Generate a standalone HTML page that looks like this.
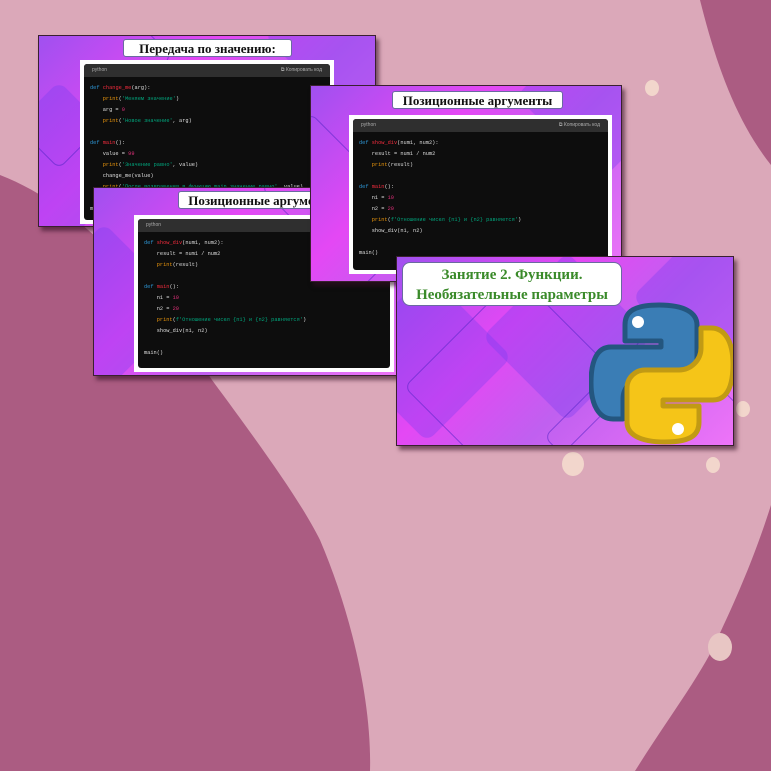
<!DOCTYPE html>
<html><head><meta charset="utf-8"><style>
*{margin:0;padding:0;box-sizing:border-box}
body{width:771px;height:771px;overflow:hidden;background:#dba8b9;position:relative;font-family:"Liberation Sans",sans-serif}
.slide{position:absolute;z-index:1;border:1px solid #3a2030;box-shadow:3px 4px 4px rgba(50,15,35,.6);overflow:hidden;
background:linear-gradient(135deg,#a050f0 0%,#e448f4 35%,#c060f0 60%,#ee74f8 100%)}
.slide .dec{position:absolute;width:120px;height:120px;transform:rotate(45deg);border-radius:10px;background:rgba(120,60,240,.35)}
.slide .ln{position:absolute;width:160px;height:160px;transform:rotate(45deg);border:1px solid rgba(90,40,200,.6);border-radius:8px}
.title{position:absolute;background:#fff;border:1px solid #6a6aa0;border-radius:3px;font-family:"Liberation Serif","DejaVu Serif",serif;font-weight:bold;font-size:13px;color:#111;text-align:center;z-index:2;white-space:nowrap;overflow:hidden}
.code{position:absolute;background:#fff;padding:4px;z-index:2}
.code .in{background:#0d0d0d;width:100%;height:100%;border-radius:3px;position:relative;overflow:hidden}
.code .hd{height:13px;background:#2f2f2f;color:#aaa;font-size:5px;line-height:13px;padding:0 8px;display:flex;justify-content:space-between}
.code pre{font-family:"Liberation Mono",monospace;font-size:5.3px;line-height:11px;color:#ddd;padding:6px 6px}
.k{color:#2e95d3}.f{color:#f22c3d}.p{color:#e9950c}.s{color:#00a67d}.n{color:#df3079}
</style></head><body>
<svg width="771" height="771" style="position:absolute;left:0;top:0">
<path d="M0 175 C90 210 160 300 212 380 C260 445 300 500 320 540 C350 610 372 700 370 771 L0 771Z" fill="#ab5c82"/>
<path d="M700 0 C715 60 735 120 771 165 L771 0Z" fill="#ab5c82"/>
<path d="M635 771 C670 715 705 670 720 633 C745 580 760 540 771 505 L771 771Z" fill="#ab5c82"/>
<ellipse cx="573" cy="464" rx="11" ry="12" fill="#f2d6cc"/><ellipse cx="713" cy="465" rx="7" ry="8" fill="#f2d6cc"/>
<ellipse cx="743" cy="409" rx="7" ry="8" fill="#f2d6cc"/><ellipse cx="652" cy="88" rx="7" ry="8" fill="#f2d6cc"/>
<ellipse cx="720" cy="647" rx="12" ry="14" fill="#e8c6c4"/>
</svg>

<div class="slide" style="left:38px;top:35px;width:338px;height:192px">
<div class="dec" style="left:-40px;top:70px"></div><div class="dec" style="left:250px;top:-60px"></div><div class="ln" style="left:-60px;top:-60px"></div>
<div class="title" style="left:84px;top:3px;width:169px;height:18px;line-height:17px">Передача по значению:</div>
<div class="code" style="left:41px;top:24px;width:254px;height:164px"><div class="in"><div class="hd"><span>python</span><span>⧉ Копировать код</span></div>
<pre><span class="k">def</span> <span class="f">change_me</span>(arg):
    <span class="p">print</span>(<span class="s">'Меняем значение'</span>)
    arg = <span class="n">0</span>
    <span class="p">print</span>(<span class="s">'Новое значение'</span>, arg)

<span class="k">def</span> <span class="f">main</span>():
    value = <span class="n">99</span>
    <span class="p">print</span>(<span class="s">'Значение равно'</span>, value)
    change_me(value)
    <span class="p">print</span>(<span class="s">'После возвращения в функцию main значение равно'</span>, value)

main()</pre></div></div></div>

<div class="slide" style="left:93px;top:187px;width:307px;height:189px">
<div class="dec" style="left:-50px;top:60px"></div><div class="ln" style="left:200px;top:-80px"></div>
<div class="title" style="left:84px;top:3px;width:170px;height:18px;line-height:17px">Позиционные аргументы</div>
<div class="code" style="left:40px;top:27px;width:260px;height:157px"><div class="in"><div class="hd"><span>python</span><span>⧉ Копировать код</span></div>
<pre><span class="k">def</span> <span class="f">show_div</span>(num1, num2):
    result = num1 / num2
    <span class="p">print</span>(result)

<span class="k">def</span> <span class="f">main</span>():
    n1 = <span class="n">10</span>
    n2 = <span class="n">20</span>
    <span class="p">print</span>(<span class="s">f'Отношение чисел {n1} и {n2} равняется'</span>)
    show_div(n1, n2)

main()</pre></div></div></div>

<div class="slide" style="left:310px;top:85px;width:312px;height:197px">
<div class="dec" style="left:230px;top:-50px"></div><div class="ln" style="left:-80px;top:60px"></div>
<div class="title" style="left:81px;top:5px;width:171px;height:18px;line-height:17px">Позиционные аргументы</div>
<div class="code" style="left:38px;top:29px;width:263px;height:159px"><div class="in"><div class="hd"><span>python</span><span>⧉ Копировать код</span></div>
<pre><span class="k">def</span> <span class="f">show_div</span>(num1, num2):
    result = num1 / num2
    <span class="p">print</span>(result)

<span class="k">def</span> <span class="f">main</span>():
    n1 = <span class="n">10</span>
    n2 = <span class="n">20</span>
    <span class="p">print</span>(<span class="s">f'Отношение чисел {n1} и {n2} равняется'</span>)
    show_div(n1, n2)

main()</pre></div></div></div>

<div class="slide" style="left:396px;top:256px;width:338px;height:190px">
<div class="dec" style="left:-30px;top:40px"></div><div class="dec" style="left:110px;top:20px"></div><div class="dec" style="left:260px;top:-20px"></div>
<div class="ln" style="left:40px;top:50px"></div><div class="ln" style="left:180px;top:100px"></div>
<div class="title" style="left:5px;top:5px;width:220px;height:44px;color:#3a8a2a;font-size:15px;line-height:20px;padding-top:2px;border-radius:8px">Занятие 2. Функции.<br>Необязательные параметры</div>
<svg style="position:absolute;left:192px;top:44px;z-index:3" width="146" height="145" viewBox="0 0 146 145">
<path d="M70 4 C40 4 36 14 36 24 L36 40 L72 40 L72 46 L22 46 C8 46 2 60 2 82 C2 104 10 118 24 118 L34 118 L34 98 C34 86 44 76 56 76 L90 76 C100 76 108 68 108 58 L108 24 C108 12 96 4 70 4Z" fill="#3a7db5" stroke="#24567f" stroke-width="5" stroke-linejoin="round"/>
<path d="M76 141 C106 141 110 131 110 121 L110 105 L74 105 L74 99 L124 99 C138 99 144 85 144 63 C144 41 136 27 122 27 L112 27 L112 47 C112 59 102 69 90 69 L56 69 C46 69 38 77 38 87 L38 121 C38 133 50 141 76 141Z" fill="#f5c518" stroke="#c19a14" stroke-width="5" stroke-linejoin="round"/>
<circle cx="49" cy="21" r="6" fill="#fff"/><circle cx="89" cy="128" r="6" fill="#fff"/>
</svg></div>
</body></html>
